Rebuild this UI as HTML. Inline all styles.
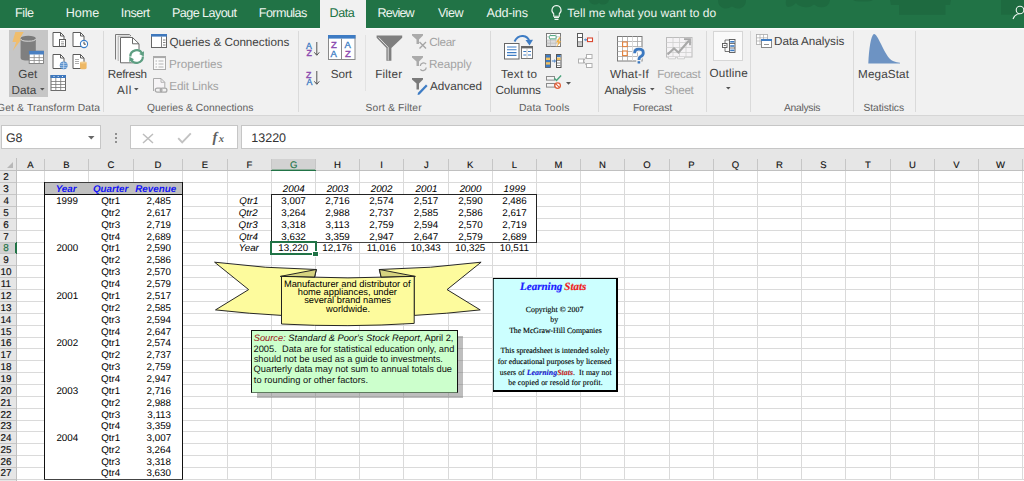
<!DOCTYPE html><html><head><meta charset="utf-8"><style>
html,body{margin:0;padding:0;}
body{width:1024px;height:481px;overflow:hidden;position:relative;background:#fff;font-family:"Liberation Sans",sans-serif;}
.t{position:absolute;white-space:pre;text-rendering:geometricPrecision;}
.r{position:absolute;}
.s{position:absolute;overflow:visible;}
</style></head><body>
<div class="r" style="left:0px;top:0px;width:1024px;height:28px;background:#217346;"></div>
<svg class="s" style="left:0px;top:0px;" width="1024" height="27" viewBox="0 0 1024 27">
<g fill="#1e6a40">
<path d="M589 0 h20 q-1 4 -5 4.4 q-3 0.2 -5 -1.5 q-2 1.7 -5 1.5 q-4 -0.4 -5 -4.4z"/>
<path d="M718 0 h28 q0 6 -5 8 q-4 1.5 -9 -1.5 q-5 3 -9 1.5 q-5 -2 -5 -8z"/>
<path d="M786 0 h44 q-1 6 -6 7 q-6 1 -10 -2.5 q-4 3.5 -10 2.5 q-6 -1 -8 -4 q-4 4 -8 4 q-3 -1 -2 -7z"/>
<path d="M853 0 h20 q-2 1.5 -10 1.5 q-8 0 -10 -1.5z"/>
<path d="M890 0 h61 l-1 5 h-4.5 v9.7 h-46.5 v-9.7 h-8z"/>
<path d="M1001 0 h23 v14.7 h-23z"/>
</g></svg>
<div class="t" style="left:15.09px;top:7px;font-size:12.6px;line-height:12.6px;color:#eef5f0;font-family:'Liberation Sans', sans-serif;letter-spacing:-0.47px;">File</div>
<div class="t" style="left:65.69px;top:7px;font-size:12.6px;line-height:12.6px;color:#eef5f0;font-family:'Liberation Sans', sans-serif;letter-spacing:-0.035px;">Home</div>
<div class="t" style="left:120.87px;top:7px;font-size:12.6px;line-height:12.6px;color:#eef5f0;font-family:'Liberation Sans', sans-serif;letter-spacing:-0.461px;">Insert</div>
<div class="t" style="left:171.99px;top:7px;font-size:12.6px;line-height:12.6px;color:#eef5f0;font-family:'Liberation Sans', sans-serif;letter-spacing:-0.568px;">Page Layout</div>
<div class="t" style="left:258.74px;top:7px;font-size:12.6px;line-height:12.6px;color:#eef5f0;font-family:'Liberation Sans', sans-serif;letter-spacing:-0.549px;">Formulas</div>
<div class="r" style="left:320px;top:0px;width:46px;height:28px;background:#f1f1f1;"></div>
<div class="t" style="left:329.49px;top:7px;font-size:12.6px;line-height:12.6px;color:#217346;font-family:'Liberation Sans', sans-serif;letter-spacing:-0.443px;">Data</div>
<div class="t" style="left:377.49px;top:7px;font-size:12.6px;line-height:12.6px;color:#eef5f0;font-family:'Liberation Sans', sans-serif;letter-spacing:-0.814px;">Review</div>
<div class="t" style="left:437.94px;top:7px;font-size:12.6px;line-height:12.6px;color:#eef5f0;font-family:'Liberation Sans', sans-serif;letter-spacing:-0.509px;">View</div>
<div class="t" style="left:486.50px;top:7px;font-size:12.6px;line-height:12.6px;color:#eef5f0;font-family:'Liberation Sans', sans-serif;letter-spacing:-0.212px;">Add-ins</div>
<svg class="s" style="left:550px;top:4px;" width="14" height="17" viewBox="0 0 14 17"><path d="M6.5 1.5 a4.6 4.6 0 0 0 -2.8 8.2 v2.6 h5.6 v-2.6 a4.6 4.6 0 0 0 -2.8 -8.2z" fill="none" stroke="#eef5f0" stroke-width="1.1"/><path d="M4 13.5 h5 M4.5 15.3 h4" stroke="#eef5f0" stroke-width="1.2"/></svg>
<div class="t" style="left:567.26px;top:7px;font-size:12px;line-height:12px;color:#eef5f0;font-family:'Liberation Sans', sans-serif;letter-spacing:0.034px;">Tell me what you want to do</div>
<svg class="s" style="left:1000px;top:5px;" width="24" height="14" viewBox="0 0 24 14"><circle cx="20" cy="5" r="3.8" fill="none" stroke="#eef5f0" stroke-width="1.1"/><path d="M13 14 q2 -5 6.5 -5.2" fill="none" stroke="#eef5f0" stroke-width="1.1"/></svg>
<div class="r" style="left:0px;top:28px;width:1024px;height:87px;background:#f1f1f1;"></div>
<div class="r" style="left:0px;top:28px;width:1024px;height:1px;background:#fcfcfc;"></div>
<div class="r" style="left:0px;top:29px;width:1024px;height:1px;background:#f7f7f7;"></div>
<div class="r" style="left:320px;top:28px;width:46px;height:2px;background:#f1f1f1;"></div>
<div class="r" style="left:0px;top:115px;width:1024px;height:1px;background:#d6d6d6;"></div>
<div class="r" style="left:103px;top:31px;width:1px;height:81px;background:#dadada;"></div>
<div class="r" style="left:298px;top:31px;width:1px;height:81px;background:#dadada;"></div>
<div class="r" style="left:490px;top:31px;width:1px;height:81px;background:#dadada;"></div>
<div class="r" style="left:598px;top:31px;width:1px;height:81px;background:#dadada;"></div>
<div class="r" style="left:706px;top:31px;width:1px;height:81px;background:#dadada;"></div>
<div class="r" style="left:750px;top:31px;width:1px;height:81px;background:#dadada;"></div>
<div class="r" style="left:853px;top:31px;width:1px;height:81px;background:#dadada;"></div>
<div class="r" style="left:915px;top:31px;width:1px;height:81px;background:#dadada;"></div>
<div class="r" style="left:365px;top:35px;width:1px;height:56px;background:#e2e2e2;"></div>
<div class="t" style="left:-3.02px;top:104px;font-size:10.3px;line-height:10.3px;color:#606060;font-family:'Liberation Sans', sans-serif;letter-spacing:0.15px;">Get &amp; Transform Data</div>
<div class="t" style="left:147.04px;top:104px;font-size:10.3px;line-height:10.3px;color:#606060;font-family:'Liberation Sans', sans-serif;letter-spacing:0.019px;">Queries &amp; Connections</div>
<div class="t" style="left:365.54px;top:104px;font-size:10.3px;line-height:10.3px;color:#606060;font-family:'Liberation Sans', sans-serif;letter-spacing:0.149px;">Sort &amp; Filter</div>
<div class="t" style="left:518.93px;top:104px;font-size:10.3px;line-height:10.3px;color:#606060;font-family:'Liberation Sans', sans-serif;letter-spacing:0.219px;">Data Tools</div>
<div class="t" style="left:632.93px;top:104px;font-size:10.3px;line-height:10.3px;color:#606060;font-family:'Liberation Sans', sans-serif;letter-spacing:-0.127px;">Forecast</div>
<div class="t" style="left:784.00px;top:104px;font-size:10.3px;line-height:10.3px;color:#606060;font-family:'Liberation Sans', sans-serif;letter-spacing:-0.287px;">Analysis</div>
<div class="t" style="left:863.54px;top:104px;font-size:10.3px;line-height:10.3px;color:#606060;font-family:'Liberation Sans', sans-serif;letter-spacing:-0.07px;">Statistics</div>
<div class="r" style="left:9px;top:30px;width:39px;height:67px;background:#c6c6c6;"></div>
<svg class="s" style="left:9px;top:30px;" width="39" height="40" viewBox="0 0 39 40">
<path d="M6.4 1.9 h8.3 l-3.9 6.6 h2.2 l-9.2 12.2 l3.5 -8.7 h-3.9z" fill="#f0bd6c"/>
<path d="M11.6 8.5 v19.5 q0 2.6 7.6 2.6 q7.6 0 7.6 -2.6 v-19.5z" fill="#7f7f7f"/>
<ellipse cx="19.2" cy="8.5" rx="7.6" ry="2.7" fill="#7a7a7a"/>
<path d="M11.8 8.8 q0 2.4 7.4 2.4 q7.4 0 7.4 -2.4" fill="none" stroke="#e4e4e4" stroke-width="0.9"/>
<rect x="20.2" y="21.2" width="14.3" height="12.3" fill="#fff" stroke="#7c7c7c" stroke-width="0.9"/>
<rect x="19.9" y="20.9" width="15" height="3.6" fill="#4a80c2"/>
<path d="M20.2 27.6 h14.3 M20.2 30.5 h14.3 M25.2 24.5 v9 M30.2 24.5 v9" stroke="#8a8a8a" stroke-width="0.8"/>
</svg>
<div class="t" style="left:18.16px;top:69px;font-size:11.7px;line-height:11.7px;color:#424242;font-family:'Liberation Sans', sans-serif;letter-spacing:0.153px;">Get</div>
<div class="t" style="left:11.56px;top:85px;font-size:11.7px;line-height:11.7px;color:#424242;font-family:'Liberation Sans', sans-serif;">Data</div>
<svg class="s" style="left:40px;top:88px;" width="5" height="3" viewBox="0 0 5 3"><path d="M0 0 h4.6 l-2.3 2.6z" fill="#555"/></svg>
<svg class="s" style="left:52px;top:32px;" width="16" height="16" viewBox="0 0 16 16"><path d="M1 0.5 h7.5 l3.5 3.5 v10.5 h-11z" fill="#fff" stroke="#5a5a5a" stroke-width="1"/><path d="M8.5 0.5 v3.5 h3.5" fill="none" stroke="#5a5a5a" stroke-width="1"/><rect x="7.5" y="7.5" width="6" height="7" fill="#fff" stroke="#5a5a5a" stroke-width="1"/><path d="M9 9.8 h3 M9 11.5 h3 M9 13 h3" stroke="#888" stroke-width="0.7"/></svg>
<svg class="s" style="left:72px;top:32px;" width="16" height="16" viewBox="0 0 16 16"><path d="M1 0.5 h7.5 l3.5 3.5 v10.5 h-11z" fill="#fff" stroke="#5a5a5a" stroke-width="1"/><path d="M8.5 0.5 v3.5 h3.5" fill="none" stroke="#5a5a5a" stroke-width="1"/><circle cx="12" cy="12" r="3.6" fill="#fff" stroke="#3c7fc9" stroke-width="1.1"/><path d="M12 9.8 v2.4 h1.8" fill="none" stroke="#333" stroke-width="0.9"/></svg>
<svg class="s" style="left:52px;top:54px;" width="16" height="16" viewBox="0 0 16 16"><path d="M1 0.5 h7.5 l3.5 3.5 v10.5 h-11z" fill="#fff" stroke="#5a5a5a" stroke-width="1"/><path d="M8.5 0.5 v3.5 h3.5" fill="none" stroke="#5a5a5a" stroke-width="1"/><circle cx="11.7" cy="11.3" r="3.9" fill="#4a86c8"/><path d="M7.8 11.3 h7.8 M11.7 7.4 v7.8 M8.6 9.3 h6.2 M8.6 13.3 h6.2" stroke="#e8f0f8" stroke-width="0.6"/></svg>
<svg class="s" style="left:72px;top:54px;" width="16" height="16" viewBox="0 0 16 16"><path d="M1 0.5 h7.5 l3.5 3.5 v10.5 h-11z" fill="#fff" stroke="#5a5a5a" stroke-width="1"/><path d="M8.5 0.5 v3.5 h3.5" fill="none" stroke="#5a5a5a" stroke-width="1"/><path d="M3 5.5 h4 M3 7.5 h4 M3 9.5 h4" stroke="#999" stroke-width="0.8"/><path d="M8 8.5 v5.5 q0 1.3 3.3 1.3 q3.3 0 3.3 -1.3 v-5.5z" fill="#eeb864"/><ellipse cx="11.3" cy="8.5" rx="3.3" ry="1.1" fill="#f3cd8d"/></svg>
<svg class="s" style="left:50px;top:75px;" width="17" height="17" viewBox="0 0 17 17"><rect x="1" y="0.5" width="14.5" height="15" fill="#fff" stroke="#6c6c6c" stroke-width="1"/><rect x="0.5" y="0" width="15.5" height="3" fill="#3f78bd"/><path d="M1 6.5 h14.5 M1 9.5 h14.5 M1 12.5 h14.5 M5.8 3 v12.5 M10.7 3 v12.5" stroke="#777" stroke-width="0.8"/><path d="M3.5 1.5 h1 M7.7 1.5 h1 M12 1.5 h1" stroke="#fff" stroke-width="0.9"/></svg>
<svg class="s" style="left:113px;top:33px;" width="34" height="32" viewBox="0 0 34 32">
<path d="M2.5 26.5 V1.5 H16.5 L18 3" fill="none" stroke="#7a7a7a" stroke-width="1"/>
<path d="M5.2 28 V3.2 H17.5" fill="none" stroke="#b0b0b0" stroke-width="1"/>
<path d="M7.5 4.5 H19.5 L26 10.8 V29.8 H7.5 Z" fill="#fff" stroke="#6a6a6a" stroke-width="1"/>
<path d="M19.5 4.5 V10.8 H26" fill="none" stroke="#6a6a6a" stroke-width="1"/>
<circle cx="23.6" cy="23.6" r="7.6" fill="#fff"/>
<path d="M17.3 23.6 A6.3 6.3 0 0 1 29.3 20.9" fill="none" stroke="#5e9e82" stroke-width="2.2"/>
<path d="M30.98 18.18 L26.14 20.98 L30.81 23.48 Z" fill="#5e9e82"/>
<path d="M29.9 23.6 A6.3 6.3 0 0 1 17.9 26.3" fill="none" stroke="#5e9e82" stroke-width="2.2"/>
<path d="M16.22 29.02 L21.06 26.22 L16.39 23.72 Z" fill="#5e9e82"/>
</svg>
<div class="t" style="left:107.81px;top:69px;font-size:11.7px;line-height:11.7px;color:#424242;font-family:'Liberation Sans', sans-serif;letter-spacing:-0.292px;">Refresh</div>
<div class="t" style="left:117.10px;top:85px;font-size:11.7px;line-height:11.7px;color:#424242;font-family:'Liberation Sans', sans-serif;letter-spacing:0.587px;">All</div>
<svg class="s" style="left:134px;top:88px;" width="5" height="3" viewBox="0 0 5 3"><path d="M0 0 h4.6 l-2.3 2.6z" fill="#555"/></svg>
<svg class="s" style="left:151px;top:34px;" width="16" height="14" viewBox="0 0 16 14"><rect x="0.5" y="0.5" width="15" height="13" fill="#fff" stroke="#666" stroke-width="1"/><rect x="0" y="0" width="16" height="2.6" fill="#3f78bd"/><path d="M10.5 2.6 v11 M12 6 h2.5 M12 8.5 h2.5 M12 11 h2.5" stroke="#777" stroke-width="0.9"/></svg>
<div class="t" style="left:169.47px;top:37px;font-size:11.7px;line-height:11.7px;color:#424242;font-family:'Liberation Sans', sans-serif;letter-spacing:-0.02px;">Queries &amp; Connections</div>
<svg class="s" style="left:153px;top:56px;" width="13" height="14" viewBox="0 0 13 14"><rect x="0.5" y="0.5" width="12" height="13" fill="#fafafa" stroke="#ababab" stroke-width="1"/><rect x="0.5" y="0.5" width="12" height="1.6" fill="#ababab"/><path d="M2.5 5 h1.5 M5.5 5 h5 M2.5 8 h1.5 M5.5 8 h5 M2.5 11 h1.5 M5.5 11 h5" stroke="#b4b4b4" stroke-width="1"/></svg>
<div class="t" style="left:169.06px;top:59px;font-size:11.7px;line-height:11.7px;color:#a3a3a3;font-family:'Liberation Sans', sans-serif;letter-spacing:0.01px;">Properties</div>
<svg class="s" style="left:153px;top:78px;" width="16" height="16" viewBox="0 0 16 16"><path d="M0.5 13 v-12.5 h7.5 l3.8 3.8 v5.5" fill="#f6f4f6" stroke="#ababab" stroke-width="1"/><path d="M8 0.5 v3.8 h3.8" fill="none" stroke="#ababab" stroke-width="0.9"/><rect x="2.3" y="10.2" width="6.6" height="3.9" rx="1.9" fill="none" stroke="#a8a8a8" stroke-width="1.3"/><rect x="7.3" y="10.2" width="6.6" height="3.9" rx="1.9" fill="none" stroke="#a8a8a8" stroke-width="1.3"/></svg>
<div class="t" style="left:169.31px;top:81px;font-size:11.7px;line-height:11.7px;color:#a3a3a3;font-family:'Liberation Sans', sans-serif;letter-spacing:-0.142px;">Edit Links</div>
<svg class="s" style="left:305.5px;top:42px;" width="16" height="15" viewBox="0 0 16 15"><text x="0" y="6.6" font-family="Liberation Sans" font-size="8.8" fill="#3e7cc4" stroke="#3e7cc4" stroke-width="0.35">A</text><text x="0.4" y="13.8" font-family="Liberation Sans" font-size="8.8" fill="#8c4bb0" stroke="#8c4bb0" stroke-width="0.35">Z</text><path d="M10.8 0 v13 M8.3 10.3 l2.5 3 l2.5 -3" fill="none" stroke="#555" stroke-width="1"/></svg>
<svg class="s" style="left:305.5px;top:71px;" width="16" height="15" viewBox="0 0 16 15"><text x="0" y="6.6" font-family="Liberation Sans" font-size="8.8" fill="#8c4bb0" stroke="#8c4bb0" stroke-width="0.35">Z</text><text x="0.4" y="13.8" font-family="Liberation Sans" font-size="8.8" fill="#3e7cc4" stroke="#3e7cc4" stroke-width="0.35">A</text><path d="M10.8 0 v13 M8.3 10.3 l2.5 3 l2.5 -3" fill="none" stroke="#555" stroke-width="1"/></svg>
<svg class="s" style="left:328px;top:35px;" width="28" height="25" viewBox="0 0 28 25">
<rect x="0.5" y="0.5" width="26.5" height="24" fill="#fff" stroke="#8a8a8a" stroke-width="1"/>
<rect x="0" y="0" width="27.5" height="3.6" fill="#3e7cc4"/>
<path d="M13.5 3.6 v21" stroke="#8a8a8a" stroke-width="1"/>
<text x="3" y="13" font-family="Liberation Sans" font-size="9.5" fill="#8c4bb0" stroke="#8c4bb0" stroke-width="0.35">Z</text>
<text x="2.6" y="22" font-family="Liberation Sans" font-size="9.5" fill="#3e7cc4" stroke="#3e7cc4" stroke-width="0.35">A</text>
<text x="16.5" y="13" font-family="Liberation Sans" font-size="9.5" fill="#3e7cc4" stroke="#3e7cc4" stroke-width="0.35">A</text>
<text x="17" y="22" font-family="Liberation Sans" font-size="9.5" fill="#8c4bb0" stroke="#8c4bb0" stroke-width="0.35">Z</text>
</svg>
<div class="t" style="left:330.72px;top:69px;font-size:11.7px;line-height:11.7px;color:#424242;font-family:'Liberation Sans', sans-serif;letter-spacing:-0.059px;">Sort</div>
<svg class="s" style="left:376px;top:35px;" width="27" height="26" viewBox="0 0 27 26"><path d="M0.6 0.6 h25.6 v2.2 l-10.8 10.2 v12.8 h-5 v-12.8 l-9.8 -10.2z" fill="#7f7f7f"/><path d="M2.6 2.4 l9.6 10 v13" fill="none" stroke="#f4f4f4" stroke-width="0.8"/></svg>
<div class="t" style="left:375.31px;top:69px;font-size:11.7px;line-height:11.7px;color:#424242;font-family:'Liberation Sans', sans-serif;letter-spacing:0.158px;">Filter</div>
<svg class="s" style="left:412px;top:34px;" width="16" height="16" viewBox="0 0 16 16"><path d="M0 0 h11 v1.5 l-4 4 v4.5 h-2.5 v-4.5 l-4.5 -4z" fill="#ababab"/><path d="M7.5 8 l6.5 6.5 M14 8 l-6.5 6.5" stroke="#a5a5a5" stroke-width="1.4"/></svg>
<div class="t" style="left:429.31px;top:37px;font-size:11.7px;line-height:11.7px;color:#a3a3a3;font-family:'Liberation Sans', sans-serif;letter-spacing:-0.386px;">Clear</div>
<svg class="s" style="left:412px;top:56px;" width="16" height="16" viewBox="0 0 16 16"><path d="M0 0 h11 v1.5 l-4 4 v4.5 h-2.5 v-4.5 l-4.5 -4z" fill="#ababab"/><path d="M8.3 10 a3.2 3.2 0 0 1 5.8 -1.8 M14.2 11.5 a3.2 3.2 0 0 1 -5.8 1.8" fill="none" stroke="#a8a8a8" stroke-width="1.3"/></svg>
<div class="t" style="left:428.96px;top:59px;font-size:11.7px;line-height:11.7px;color:#a3a3a3;font-family:'Liberation Sans', sans-serif;letter-spacing:-0.042px;">Reapply</div>
<svg class="s" style="left:412px;top:78px;" width="17" height="17" viewBox="0 0 17 17"><path d="M0 0 h11 v1.5 l-4 4 v6 h-2.5 v-6 l-4.5 -4z" fill="#7a7a7a"/><path d="M6 14.8 l8 -8.3 l1.6 1.6 l-8 8.3 l-2 0.6z" fill="#3e7cc4"/></svg>
<div class="t" style="left:430.00px;top:81px;font-size:11.7px;line-height:11.7px;color:#424242;font-family:'Liberation Sans', sans-serif;letter-spacing:0.001px;">Advanced</div>
<svg class="s" style="left:503px;top:35px;" width="31" height="25" viewBox="0 0 31 25">
<path d="M11.5 6.5 q3 -6 8.5 -5.5 q5 0.5 6.5 5.5" fill="none" stroke="#3e7cc4" stroke-width="2"/>
<path d="M22.5 5 l4 5.5 l3.5 -5.8z" fill="#3e7cc4"/>
<rect x="1.5" y="8.5" width="14.5" height="15.5" fill="#fff" stroke="#666" stroke-width="1"/>
<path d="M4 12 h9.5 M4 14.8 h9.5 M4 17.6 h9.5 M4 20.4 h9.5" stroke="#3e7cc4" stroke-width="1.1"/>
<rect x="18.5" y="11.5" width="11" height="12" fill="#fff" stroke="#777" stroke-width="1"/>
<rect x="18" y="11" width="12" height="2.4" fill="#666"/>
<path d="M20.3 16.5 h3 M25 16.5 h3 M20.3 20 h3 M25 20 h3" stroke="#3e7cc4" stroke-width="1"/>
<path d="M24 13.4 v10" stroke="#aaa" stroke-width="0.6"/>
</svg>
<div class="t" style="left:501.02px;top:69px;font-size:11.7px;line-height:11.7px;color:#424242;font-family:'Liberation Sans', sans-serif;letter-spacing:0.249px;">Text to</div>
<div class="t" style="left:495.42px;top:85px;font-size:11.7px;line-height:11.7px;color:#424242;font-family:'Liberation Sans', sans-serif;letter-spacing:-0.094px;">Columns</div>
<svg class="s" style="left:546px;top:33px;" width="16" height="15" viewBox="0 0 16 15"><rect x="0.5" y="0.5" width="14" height="13" fill="#fff" stroke="#7a7a7a" stroke-width="1"/><rect x="1" y="7" width="9" height="6" fill="#dcdcdc"/><path d="M0.5 3.8 h14 M0.5 7 h14 M0.5 10.2 h14 M4.5 0.5 v13 M10 0.5 v13" stroke="#b8b8b8" stroke-width="0.7"/><rect x="3.3" y="2.6" width="6.8" height="3.3" rx="0.8" fill="#fff" stroke="#49a37b" stroke-width="1"/><path d="M13.2 4.2 l-3.3 5.3 h2.3 l-1.8 5 l4.8 -6.2 h-2.4 l1.8 -4.1z" fill="#f0b24a"/></svg>
<svg class="s" style="left:545px;top:54px;" width="17" height="14" viewBox="0 0 17 14"><rect x="0.5" y="0.5" width="5" height="13" fill="#3e7cc4" stroke="#555" stroke-width="0.8"/><rect x="1" y="3.6" width="4" height="2.4" fill="#f0c060"/><rect x="1" y="8.2" width="4" height="2.4" fill="#f0c060"/><rect x="11.5" y="0.5" width="4.5" height="13" fill="#fff" stroke="#555" stroke-width="1"/><rect x="12" y="1" width="3.5" height="2.2" fill="#3e7cc4"/><rect x="12" y="3.6" width="3.5" height="2.4" fill="#f0c060"/><path d="M12 6.5 h3.5 M12 9 h3.5 M12 11.5 h3.5" stroke="#777" stroke-width="0.8"/><path d="M6.8 7 h3.6 M9 5.6 l1.5 1.4 l-1.5 1.4" fill="none" stroke="#3e7cc4" stroke-width="1"/></svg>
<svg class="s" style="left:546px;top:75px;" width="16" height="14" viewBox="0 0 16 14"><rect x="0.5" y="1.5" width="8" height="3.6" fill="#f4f4f4" stroke="#8a8a8a" stroke-width="1"/><rect x="0.5" y="8.5" width="8" height="3.6" fill="#f4f4f4" stroke="#8a8a8a" stroke-width="1"/><path d="M8.3 3.3 l2.2 2.2 l4.6 -5" fill="none" stroke="#49a37b" stroke-width="1.4"/><circle cx="11.6" cy="10.6" r="2.8" fill="#fff" stroke="#e0603c" stroke-width="1.3"/><path d="M9.8 8.8 l3.6 3.6" stroke="#e0603c" stroke-width="1.1"/></svg>
<svg class="s" style="left:566px;top:82px;" width="5" height="3" viewBox="0 0 5 3"><path d="M0 0 h5 l-2.5 2.8z" fill="#555"/></svg>
<svg class="s" style="left:577px;top:33px;" width="16" height="14" viewBox="0 0 16 14"><rect x="0.5" y="0.5" width="5" height="13" fill="#fff" stroke="#5a5a5a" stroke-width="1"/><path d="M0.5 4.5 h5 M0.5 9 h5" stroke="#5a5a5a" stroke-width="1"/><rect x="1" y="9.5" width="4" height="3.5" fill="#ccc"/><rect x="10.5" y="5" width="5" height="3.6" fill="#fff" stroke="#d9462e" stroke-width="1.1"/><path d="M7 6.8 h3 M8.3 5.8 l1.2 1 l-1.2 1" fill="none" stroke="#3e7cc4" stroke-width="0.9"/></svg>
<svg class="s" style="left:578px;top:54px;" width="15" height="14" viewBox="0 0 15 14"><rect x="0.5" y="5" width="5" height="4" fill="#fff" stroke="#b0b0b0" stroke-width="1"/><rect x="8.5" y="0.5" width="5.5" height="4" fill="#fff" stroke="#b0b0b0" stroke-width="1"/><rect x="8.5" y="9.5" width="5.5" height="4" fill="#fff" stroke="#b0b0b0" stroke-width="1"/><path d="M5.5 7 l3 -4.5 M5.5 7 l3 4.5" stroke="#b0b0b0" stroke-width="1"/></svg>
<svg class="s" style="left:617px;top:36px;" width="28" height="28" viewBox="0 0 28 28">
<rect x="0.5" y="0.5" width="24.5" height="24.5" fill="#fff" stroke="#7a7a7a" stroke-width="1"/>
<path d="M0.5 5.5 h24.5 M0.5 10.5 h24.5 M0.5 15.5 h24.5 M0.5 20.5 h24.5 M5.5 0.5 v24.5 M10.5 0.5 v24.5 M20.5 0.5 v24.5" stroke="#a8a8a8" stroke-width="0.8"/>
<path d="M15.5 0.5 v24.5" stroke="#d8d8d8" stroke-width="0.9"/>
<rect x="5.6" y="6" width="4.6" height="4.6" fill="#fff" stroke="#e2803a" stroke-width="1.1"/>
<rect x="5.6" y="15" width="4.6" height="4.6" fill="#fff" stroke="#e2803a" stroke-width="1.1"/>
<path d="M17.6 17.2 q0 -4 4.3 -4 q4.4 0 4.4 3.7 q0 2.4 -2.5 3.6 q-1.8 0.8 -1.8 3.4" fill="none" stroke="#f1f1f1" stroke-width="5"/>
<rect x="19.2" y="24" width="5.2" height="4.6" fill="#f1f1f1"/>
<path d="M17.6 17.2 q0 -4 4.3 -4 q4.4 0 4.4 3.7 q0 2.4 -2.5 3.6 q-1.8 0.8 -1.8 3.4" fill="none" stroke="#3b78c0" stroke-width="2.8"/>
<rect x="20.6" y="25.2" width="2.6" height="2.3" fill="#3b78c0"/>
</svg>
<div class="t" style="left:609.94px;top:69px;font-size:11.7px;line-height:11.7px;color:#424242;font-family:'Liberation Sans', sans-serif;letter-spacing:0.179px;">What-If</div>
<div class="t" style="left:604.50px;top:85px;font-size:11.7px;line-height:11.7px;color:#424242;font-family:'Liberation Sans', sans-serif;letter-spacing:-0.275px;">Analysis</div>
<svg class="s" style="left:650px;top:88px;" width="5" height="3" viewBox="0 0 5 3"><path d="M0 0 h4.6 l-2.3 2.6z" fill="#555"/></svg>
<svg class="s" style="left:666px;top:37px;" width="27" height="23" viewBox="0 0 27 23">
<rect x="0.5" y="0.5" width="25.5" height="19.5" fill="#f5f3f5" stroke="#bcbcbc" stroke-width="1"/>
<path d="M0.5 5.5 h25.5 M0.5 10.5 h25.5 M0.5 15.5 h25.5 M7 0.5 v19.5 M13.5 0.5 v19.5 M20 0.5 v19.5" stroke="#cfcfcf" stroke-width="0.8"/>
<path d="M1.5 17.5 l6.5 -6 l4.5 4 l10.5 -12" fill="none" stroke="#a8a8a8" stroke-width="2.1"/>
<path d="M18 2.2 h6 v6" fill="none" stroke="#a8a8a8" stroke-width="1.8"/>
<path d="M2.5 20 v1.8 h7 v-1.8 M11.5 20 v1.8 h7 v-1.8" fill="#f5f3f5" stroke="#c8c8c8" stroke-width="0.8"/>
</svg>
<div class="t" style="left:657.16px;top:69px;font-size:11.7px;line-height:11.7px;color:#a3a3a3;font-family:'Liberation Sans', sans-serif;letter-spacing:-0.28px;">Forecast</div>
<div class="t" style="left:664.57px;top:85px;font-size:11.7px;line-height:11.7px;color:#a3a3a3;font-family:'Liberation Sans', sans-serif;letter-spacing:-0.325px;">Sheet</div>
<div class="r" style="left:713px;top:31px;width:30px;height:30px;background:#fafafa;box-sizing:border-box;border:1px solid #d6d6d6;"></div>
<svg class="s" style="left:721.5px;top:38.5px;" width="14" height="14" viewBox="0 0 14 14"><rect x="0.5" y="4.5" width="4.5" height="4" fill="#fff" stroke="#555" stroke-width="0.9"/><path d="M1.8 6.5 h2" stroke="#555" stroke-width="0.8"/><path d="M3 4.5 v-3.5 h4 M3 8.5 v4 h4" fill="none" stroke="#555" stroke-width="0.8"/><rect x="7.5" y="0.5" width="5.5" height="13" fill="#fff" stroke="#555" stroke-width="0.9"/><path d="M7.5 4.5 h5.5 M7.5 9 h5.5" stroke="#555" stroke-width="0.8"/><rect x="8.2" y="2" width="4.2" height="1.6" fill="#3e7cc4"/><rect x="8.2" y="6.2" width="4.2" height="1.6" fill="#3e7cc4"/><rect x="8.2" y="10.6" width="4.2" height="1.6" fill="#3e7cc4"/></svg>
<div class="t" style="left:709.47px;top:68px;font-size:11.7px;line-height:11.7px;color:#424242;font-family:'Liberation Sans', sans-serif;letter-spacing:0.212px;">Outline</div>
<svg class="s" style="left:726px;top:87px;" width="5" height="3" viewBox="0 0 5 3"><path d="M0 0 h4.6 l-2.3 2.6z" fill="#555"/></svg>
<svg class="s" style="left:756px;top:34px;" width="16" height="14" viewBox="0 0 16 14"><rect x="0.5" y="0.5" width="11" height="10" fill="#fff" stroke="#aaa" stroke-width="0.8"/><path d="M0.5 3.8 h11 M0.5 7 h11 M4 0.5 v10 M7.5 0.5 v10" stroke="#aaa" stroke-width="0.7"/><rect x="5.5" y="5.5" width="10" height="8" fill="#fff" stroke="#888" stroke-width="1"/><rect x="5" y="5" width="11" height="2" fill="#3e7cc4"/><path d="M8 10.5 h5" stroke="#888" stroke-width="0.9"/></svg>
<div class="t" style="left:774.06px;top:36px;font-size:11.7px;line-height:11.7px;color:#424242;font-family:'Liberation Sans', sans-serif;letter-spacing:-0.046px;">Data Analysis</div>
<svg class="s" style="left:868px;top:34px;" width="33" height="30" viewBox="0 0 33 30"><path d="M0.3 29.6 C1 14 3 2 5.5 0.2 C7.5 -0.8 9.5 3 13 10 C17 18 20 24.5 25 27 C28 28.5 30 28.5 32 28.8 V29.6 Z" fill="#6d93c3"/></svg>
<div class="t" style="left:858.06px;top:69px;font-size:11.7px;line-height:11.7px;color:#424242;font-family:'Liberation Sans', sans-serif;letter-spacing:0.131px;">MegaStat</div>
<div class="r" style="left:0px;top:116px;width:1024px;height:42px;background:#e6e6e6;"></div>
<div class="r" style="left:1px;top:125px;width:100px;height:24px;background:#fff;box-sizing:border-box;border:1px solid #c6c6c6;"></div>
<div class="t" style="left:5.88px;top:132px;font-size:12.4px;line-height:12.4px;color:#333;font-family:'Liberation Sans', sans-serif;">G8</div>
<svg class="s" style="left:88px;top:136px;" width="7" height="4" viewBox="0 0 7 4"><path d="M0 0 h6.5 l-3.25 3.5z" fill="#666"/></svg>
<div class="r" style="left:115px;top:133px;width:2px;height:2px;background:#8f8f8f;"></div>
<div class="r" style="left:115px;top:137px;width:2px;height:2px;background:#8f8f8f;"></div>
<div class="r" style="left:115px;top:141px;width:2px;height:2px;background:#8f8f8f;"></div>
<div class="r" style="left:130px;top:125px;width:108px;height:24px;background:#fff;box-sizing:border-box;border:1px solid #c6c6c6;"></div>
<svg class="s" style="left:142px;top:133px;" width="12" height="11" viewBox="0 0 12 11"><path d="M1 1 l10 9 M11 1 l-10 9" stroke="#bdbdbd" stroke-width="1.5"/></svg>
<svg class="s" style="left:177px;top:132px;" width="15" height="12" viewBox="0 0 15 12"><path d="M1.2 6.2 l4 4.2 l8.6 -9" fill="none" stroke="#c2c2c2" stroke-width="1.9"/></svg>
<div class="t" style="left:212.40px;top:131px;font-size:14.5px;line-height:14.5px;color:#606060;font-family:'Liberation Serif', serif;font-style:italic;font-weight:bold;">f</div>
<div class="t" style="left:218.66px;top:135px;font-size:10.5px;line-height:10.5px;color:#606060;font-family:'Liberation Serif', serif;font-style:italic;font-weight:bold;">x</div>
<div class="r" style="left:241px;top:125px;width:790px;height:24px;background:#fff;box-sizing:border-box;border:1px solid #c6c6c6;"></div>
<div class="t" style="left:251.31px;top:132px;font-size:12.5px;line-height:12.5px;color:#333;font-family:'Liberation Sans', sans-serif;">13220</div>
<div class="r" style="left:0px;top:158px;width:1024px;height:12px;background:#e6e6e6;"></div>
<div class="r" style="left:0px;top:170px;width:1024px;height:1px;background:#c0c0c0;"></div>
<div class="r" style="left:0px;top:171px;width:16px;height:310px;background:#e6e6e6;"></div>
<div class="r" style="left:16px;top:158px;width:1px;height:323px;background:#c0c0c0;"></div>
<div class="r" style="left:272px;top:159px;width:43px;height:11px;background:#d2d2d2;"></div>
<div class="r" style="left:271px;top:169px;width:45px;height:1px;background:#8fb09b;"></div>
<div class="r" style="left:271px;top:170px;width:45px;height:1px;background:#217346;"></div>
<div class="r" style="left:0px;top:243px;width:16px;height:10px;background:#d2d2d2;"></div>
<div class="r" style="left:15px;top:242px;width:2px;height:12px;background:#217346;"></div>
<div class="r" style="left:44px;top:171px;width:1px;height:310px;background:#dadada;"></div>
<div class="r" style="left:44px;top:159px;width:1px;height:11px;background:#c6c6c6;"></div>
<div class="r" style="left:88px;top:171px;width:1px;height:310px;background:#dadada;"></div>
<div class="r" style="left:88px;top:159px;width:1px;height:11px;background:#c6c6c6;"></div>
<div class="r" style="left:133px;top:171px;width:1px;height:310px;background:#dadada;"></div>
<div class="r" style="left:133px;top:159px;width:1px;height:11px;background:#c6c6c6;"></div>
<div class="r" style="left:182px;top:171px;width:1px;height:310px;background:#dadada;"></div>
<div class="r" style="left:182px;top:159px;width:1px;height:11px;background:#c6c6c6;"></div>
<div class="r" style="left:227px;top:171px;width:1px;height:310px;background:#dadada;"></div>
<div class="r" style="left:227px;top:159px;width:1px;height:11px;background:#c6c6c6;"></div>
<div class="r" style="left:271px;top:171px;width:1px;height:310px;background:#dadada;"></div>
<div class="r" style="left:271px;top:159px;width:1px;height:11px;background:#c6c6c6;"></div>
<div class="r" style="left:315px;top:171px;width:1px;height:310px;background:#dadada;"></div>
<div class="r" style="left:315px;top:159px;width:1px;height:11px;background:#c6c6c6;"></div>
<div class="r" style="left:359px;top:171px;width:1px;height:310px;background:#dadada;"></div>
<div class="r" style="left:359px;top:159px;width:1px;height:11px;background:#c6c6c6;"></div>
<div class="r" style="left:403px;top:171px;width:1px;height:310px;background:#dadada;"></div>
<div class="r" style="left:403px;top:159px;width:1px;height:11px;background:#c6c6c6;"></div>
<div class="r" style="left:448px;top:171px;width:1px;height:310px;background:#dadada;"></div>
<div class="r" style="left:448px;top:159px;width:1px;height:11px;background:#c6c6c6;"></div>
<div class="r" style="left:492px;top:171px;width:1px;height:310px;background:#dadada;"></div>
<div class="r" style="left:492px;top:159px;width:1px;height:11px;background:#c6c6c6;"></div>
<div class="r" style="left:536px;top:171px;width:1px;height:310px;background:#dadada;"></div>
<div class="r" style="left:536px;top:159px;width:1px;height:11px;background:#c6c6c6;"></div>
<div class="r" style="left:580px;top:171px;width:1px;height:310px;background:#dadada;"></div>
<div class="r" style="left:580px;top:159px;width:1px;height:11px;background:#c6c6c6;"></div>
<div class="r" style="left:624px;top:171px;width:1px;height:310px;background:#dadada;"></div>
<div class="r" style="left:624px;top:159px;width:1px;height:11px;background:#c6c6c6;"></div>
<div class="r" style="left:669px;top:171px;width:1px;height:310px;background:#dadada;"></div>
<div class="r" style="left:669px;top:159px;width:1px;height:11px;background:#c6c6c6;"></div>
<div class="r" style="left:713px;top:171px;width:1px;height:310px;background:#dadada;"></div>
<div class="r" style="left:713px;top:159px;width:1px;height:11px;background:#c6c6c6;"></div>
<div class="r" style="left:757px;top:171px;width:1px;height:310px;background:#dadada;"></div>
<div class="r" style="left:757px;top:159px;width:1px;height:11px;background:#c6c6c6;"></div>
<div class="r" style="left:801px;top:171px;width:1px;height:310px;background:#dadada;"></div>
<div class="r" style="left:801px;top:159px;width:1px;height:11px;background:#c6c6c6;"></div>
<div class="r" style="left:845px;top:171px;width:1px;height:310px;background:#dadada;"></div>
<div class="r" style="left:845px;top:159px;width:1px;height:11px;background:#c6c6c6;"></div>
<div class="r" style="left:890px;top:171px;width:1px;height:310px;background:#dadada;"></div>
<div class="r" style="left:890px;top:159px;width:1px;height:11px;background:#c6c6c6;"></div>
<div class="r" style="left:934px;top:171px;width:1px;height:310px;background:#dadada;"></div>
<div class="r" style="left:934px;top:159px;width:1px;height:11px;background:#c6c6c6;"></div>
<div class="r" style="left:978px;top:171px;width:1px;height:310px;background:#dadada;"></div>
<div class="r" style="left:978px;top:159px;width:1px;height:11px;background:#c6c6c6;"></div>
<div class="r" style="left:1022px;top:171px;width:1px;height:310px;background:#dadada;"></div>
<div class="r" style="left:1022px;top:159px;width:1px;height:11px;background:#c6c6c6;"></div>
<div class="r" style="left:17px;top:182px;width:1007px;height:1px;background:#dadada;"></div>
<div class="r" style="left:0px;top:182px;width:16px;height:1px;background:#c6c6c6;"></div>
<div class="r" style="left:17px;top:194px;width:1007px;height:1px;background:#dadada;"></div>
<div class="r" style="left:0px;top:194px;width:16px;height:1px;background:#c6c6c6;"></div>
<div class="r" style="left:17px;top:206px;width:1007px;height:1px;background:#dadada;"></div>
<div class="r" style="left:0px;top:206px;width:16px;height:1px;background:#c6c6c6;"></div>
<div class="r" style="left:17px;top:218px;width:1007px;height:1px;background:#dadada;"></div>
<div class="r" style="left:0px;top:218px;width:16px;height:1px;background:#c6c6c6;"></div>
<div class="r" style="left:17px;top:230px;width:1007px;height:1px;background:#dadada;"></div>
<div class="r" style="left:0px;top:230px;width:16px;height:1px;background:#c6c6c6;"></div>
<div class="r" style="left:17px;top:242px;width:1007px;height:1px;background:#dadada;"></div>
<div class="r" style="left:0px;top:242px;width:16px;height:1px;background:#c6c6c6;"></div>
<div class="r" style="left:17px;top:253px;width:1007px;height:1px;background:#dadada;"></div>
<div class="r" style="left:0px;top:253px;width:16px;height:1px;background:#c6c6c6;"></div>
<div class="r" style="left:17px;top:265px;width:1007px;height:1px;background:#dadada;"></div>
<div class="r" style="left:0px;top:265px;width:16px;height:1px;background:#c6c6c6;"></div>
<div class="r" style="left:17px;top:277px;width:1007px;height:1px;background:#dadada;"></div>
<div class="r" style="left:0px;top:277px;width:16px;height:1px;background:#c6c6c6;"></div>
<div class="r" style="left:17px;top:289px;width:1007px;height:1px;background:#dadada;"></div>
<div class="r" style="left:0px;top:289px;width:16px;height:1px;background:#c6c6c6;"></div>
<div class="r" style="left:17px;top:301px;width:1007px;height:1px;background:#dadada;"></div>
<div class="r" style="left:0px;top:301px;width:16px;height:1px;background:#c6c6c6;"></div>
<div class="r" style="left:17px;top:313px;width:1007px;height:1px;background:#dadada;"></div>
<div class="r" style="left:0px;top:313px;width:16px;height:1px;background:#c6c6c6;"></div>
<div class="r" style="left:17px;top:325px;width:1007px;height:1px;background:#dadada;"></div>
<div class="r" style="left:0px;top:325px;width:16px;height:1px;background:#c6c6c6;"></div>
<div class="r" style="left:17px;top:337px;width:1007px;height:1px;background:#dadada;"></div>
<div class="r" style="left:0px;top:337px;width:16px;height:1px;background:#c6c6c6;"></div>
<div class="r" style="left:17px;top:348px;width:1007px;height:1px;background:#dadada;"></div>
<div class="r" style="left:0px;top:348px;width:16px;height:1px;background:#c6c6c6;"></div>
<div class="r" style="left:17px;top:360px;width:1007px;height:1px;background:#dadada;"></div>
<div class="r" style="left:0px;top:360px;width:16px;height:1px;background:#c6c6c6;"></div>
<div class="r" style="left:17px;top:372px;width:1007px;height:1px;background:#dadada;"></div>
<div class="r" style="left:0px;top:372px;width:16px;height:1px;background:#c6c6c6;"></div>
<div class="r" style="left:17px;top:384px;width:1007px;height:1px;background:#dadada;"></div>
<div class="r" style="left:0px;top:384px;width:16px;height:1px;background:#c6c6c6;"></div>
<div class="r" style="left:17px;top:396px;width:1007px;height:1px;background:#dadada;"></div>
<div class="r" style="left:0px;top:396px;width:16px;height:1px;background:#c6c6c6;"></div>
<div class="r" style="left:17px;top:408px;width:1007px;height:1px;background:#dadada;"></div>
<div class="r" style="left:0px;top:408px;width:16px;height:1px;background:#c6c6c6;"></div>
<div class="r" style="left:17px;top:420px;width:1007px;height:1px;background:#dadada;"></div>
<div class="r" style="left:0px;top:420px;width:16px;height:1px;background:#c6c6c6;"></div>
<div class="r" style="left:17px;top:431px;width:1007px;height:1px;background:#dadada;"></div>
<div class="r" style="left:0px;top:431px;width:16px;height:1px;background:#c6c6c6;"></div>
<div class="r" style="left:17px;top:443px;width:1007px;height:1px;background:#dadada;"></div>
<div class="r" style="left:0px;top:443px;width:16px;height:1px;background:#c6c6c6;"></div>
<div class="r" style="left:17px;top:455px;width:1007px;height:1px;background:#dadada;"></div>
<div class="r" style="left:0px;top:455px;width:16px;height:1px;background:#c6c6c6;"></div>
<div class="r" style="left:17px;top:467px;width:1007px;height:1px;background:#dadada;"></div>
<div class="r" style="left:0px;top:467px;width:16px;height:1px;background:#c6c6c6;"></div>
<div class="r" style="left:17px;top:479px;width:1007px;height:1px;background:#dadada;"></div>
<div class="r" style="left:0px;top:479px;width:16px;height:1px;background:#c6c6c6;"></div>
<div class="r" style="left:17px;top:480px;width:1007px;height:1px;background:#fff;"></div>
<svg class="s" style="left:7px;top:162px;" width="7" height="7" viewBox="0 0 7 7"><path d="M6 0 v6 h-6z" fill="#b8b8b8"/></svg>
<div class="t" style="left:27.34px;top:161px;font-size:9.5px;line-height:9.5px;color:#111;font-family:'Liberation Sans', sans-serif;-webkit-text-stroke:0.15px currentColor;">A</div>
<div class="t" style="left:63.20px;top:161px;font-size:9.5px;line-height:9.5px;color:#111;font-family:'Liberation Sans', sans-serif;-webkit-text-stroke:0.15px currentColor;">B</div>
<div class="t" style="left:107.51px;top:161px;font-size:9.5px;line-height:9.5px;color:#111;font-family:'Liberation Sans', sans-serif;-webkit-text-stroke:0.15px currentColor;">C</div>
<div class="t" style="left:154.41px;top:161px;font-size:9.5px;line-height:9.5px;color:#111;font-family:'Liberation Sans', sans-serif;-webkit-text-stroke:0.15px currentColor;">D</div>
<div class="t" style="left:201.65px;top:161px;font-size:9.5px;line-height:9.5px;color:#111;font-family:'Liberation Sans', sans-serif;-webkit-text-stroke:0.15px currentColor;">E</div>
<div class="t" style="left:246.41px;top:161px;font-size:9.5px;line-height:9.5px;color:#111;font-family:'Liberation Sans', sans-serif;-webkit-text-stroke:0.15px currentColor;">F</div>
<div class="t" style="left:289.91px;top:161px;font-size:9.5px;line-height:9.5px;color:#217346;font-family:'Liberation Sans', sans-serif;-webkit-text-stroke:0.15px currentColor;">G</div>
<div class="t" style="left:334.08px;top:161px;font-size:9.5px;line-height:9.5px;color:#111;font-family:'Liberation Sans', sans-serif;-webkit-text-stroke:0.15px currentColor;">H</div>
<div class="t" style="left:380.19px;top:161px;font-size:9.5px;line-height:9.5px;color:#111;font-family:'Liberation Sans', sans-serif;-webkit-text-stroke:0.15px currentColor;">I</div>
<div class="t" style="left:423.91px;top:161px;font-size:9.5px;line-height:9.5px;color:#111;font-family:'Liberation Sans', sans-serif;-webkit-text-stroke:0.15px currentColor;">J</div>
<div class="t" style="left:467.01px;top:161px;font-size:9.5px;line-height:9.5px;color:#111;font-family:'Liberation Sans', sans-serif;-webkit-text-stroke:0.15px currentColor;">K</div>
<div class="t" style="left:511.63px;top:161px;font-size:9.5px;line-height:9.5px;color:#111;font-family:'Liberation Sans', sans-serif;-webkit-text-stroke:0.15px currentColor;">L</div>
<div class="t" style="left:554.56px;top:161px;font-size:9.5px;line-height:9.5px;color:#111;font-family:'Liberation Sans', sans-serif;-webkit-text-stroke:0.15px currentColor;">M</div>
<div class="t" style="left:599.08px;top:161px;font-size:9.5px;line-height:9.5px;color:#111;font-family:'Liberation Sans', sans-serif;-webkit-text-stroke:0.15px currentColor;">N</div>
<div class="t" style="left:643.32px;top:161px;font-size:9.5px;line-height:9.5px;color:#111;font-family:'Liberation Sans', sans-serif;-webkit-text-stroke:0.15px currentColor;">O</div>
<div class="t" style="left:688.20px;top:161px;font-size:9.5px;line-height:9.5px;color:#111;font-family:'Liberation Sans', sans-serif;-webkit-text-stroke:0.15px currentColor;">P</div>
<div class="t" style="left:731.82px;top:161px;font-size:9.5px;line-height:9.5px;color:#111;font-family:'Liberation Sans', sans-serif;-webkit-text-stroke:0.15px currentColor;">Q</div>
<div class="t" style="left:775.91px;top:161px;font-size:9.5px;line-height:9.5px;color:#111;font-family:'Liberation Sans', sans-serif;-webkit-text-stroke:0.15px currentColor;">R</div>
<div class="t" style="left:820.34px;top:161px;font-size:9.5px;line-height:9.5px;color:#111;font-family:'Liberation Sans', sans-serif;-webkit-text-stroke:0.15px currentColor;">S</div>
<div class="t" style="left:865.10px;top:161px;font-size:9.5px;line-height:9.5px;color:#111;font-family:'Liberation Sans', sans-serif;-webkit-text-stroke:0.15px currentColor;">T</div>
<div class="t" style="left:909.08px;top:161px;font-size:9.5px;line-height:9.5px;color:#111;font-family:'Liberation Sans', sans-serif;-webkit-text-stroke:0.15px currentColor;">U</div>
<div class="t" style="left:953.34px;top:161px;font-size:9.5px;line-height:9.5px;color:#111;font-family:'Liberation Sans', sans-serif;-webkit-text-stroke:0.15px currentColor;">V</div>
<div class="t" style="left:996.01px;top:161px;font-size:9.5px;line-height:9.5px;color:#111;font-family:'Liberation Sans', sans-serif;-webkit-text-stroke:0.15px currentColor;">W</div>
<div class="t" style="left:3.35px;top:173px;font-size:9.9px;line-height:9.9px;color:#111;font-family:'Liberation Sans', sans-serif;-webkit-text-stroke:0.15px currentColor;">2</div>
<div class="t" style="left:3.35px;top:185px;font-size:9.9px;line-height:9.9px;color:#111;font-family:'Liberation Sans', sans-serif;-webkit-text-stroke:0.15px currentColor;">3</div>
<div class="t" style="left:3.40px;top:197px;font-size:9.9px;line-height:9.9px;color:#111;font-family:'Liberation Sans', sans-serif;-webkit-text-stroke:0.15px currentColor;">4</div>
<div class="t" style="left:3.35px;top:209px;font-size:9.9px;line-height:9.9px;color:#111;font-family:'Liberation Sans', sans-serif;-webkit-text-stroke:0.15px currentColor;">5</div>
<div class="t" style="left:3.30px;top:221px;font-size:9.9px;line-height:9.9px;color:#111;font-family:'Liberation Sans', sans-serif;-webkit-text-stroke:0.15px currentColor;">6</div>
<div class="t" style="left:3.35px;top:233px;font-size:9.9px;line-height:9.9px;color:#111;font-family:'Liberation Sans', sans-serif;-webkit-text-stroke:0.15px currentColor;">7</div>
<div class="t" style="left:3.33px;top:244px;font-size:9.9px;line-height:9.9px;color:#217346;font-family:'Liberation Sans', sans-serif;-webkit-text-stroke:0.15px currentColor;">8</div>
<div class="t" style="left:3.35px;top:256px;font-size:9.9px;line-height:9.9px;color:#111;font-family:'Liberation Sans', sans-serif;-webkit-text-stroke:0.15px currentColor;">9</div>
<div class="t" style="left:0.41px;top:268px;font-size:9.9px;line-height:9.9px;color:#111;font-family:'Liberation Sans', sans-serif;-webkit-text-stroke:0.15px currentColor;">10</div>
<div class="t" style="left:0.83px;top:280px;font-size:9.9px;line-height:9.9px;color:#111;font-family:'Liberation Sans', sans-serif;-webkit-text-stroke:0.15px currentColor;">11</div>
<div class="t" style="left:0.48px;top:292px;font-size:9.9px;line-height:9.9px;color:#111;font-family:'Liberation Sans', sans-serif;-webkit-text-stroke:0.15px currentColor;">12</div>
<div class="t" style="left:0.43px;top:304px;font-size:9.9px;line-height:9.9px;color:#111;font-family:'Liberation Sans', sans-serif;-webkit-text-stroke:0.15px currentColor;">13</div>
<div class="t" style="left:0.38px;top:316px;font-size:9.9px;line-height:9.9px;color:#111;font-family:'Liberation Sans', sans-serif;-webkit-text-stroke:0.15px currentColor;">14</div>
<div class="t" style="left:0.43px;top:328px;font-size:9.9px;line-height:9.9px;color:#111;font-family:'Liberation Sans', sans-serif;-webkit-text-stroke:0.15px currentColor;">15</div>
<div class="t" style="left:0.43px;top:339px;font-size:9.9px;line-height:9.9px;color:#111;font-family:'Liberation Sans', sans-serif;-webkit-text-stroke:0.15px currentColor;">16</div>
<div class="t" style="left:0.48px;top:351px;font-size:9.9px;line-height:9.9px;color:#111;font-family:'Liberation Sans', sans-serif;-webkit-text-stroke:0.15px currentColor;">17</div>
<div class="t" style="left:0.43px;top:363px;font-size:9.9px;line-height:9.9px;color:#111;font-family:'Liberation Sans', sans-serif;-webkit-text-stroke:0.15px currentColor;">18</div>
<div class="t" style="left:0.46px;top:375px;font-size:9.9px;line-height:9.9px;color:#111;font-family:'Liberation Sans', sans-serif;-webkit-text-stroke:0.15px currentColor;">19</div>
<div class="t" style="left:0.53px;top:387px;font-size:9.9px;line-height:9.9px;color:#111;font-family:'Liberation Sans', sans-serif;-webkit-text-stroke:0.15px currentColor;">20</div>
<div class="t" style="left:0.58px;top:399px;font-size:9.9px;line-height:9.9px;color:#111;font-family:'Liberation Sans', sans-serif;-webkit-text-stroke:0.15px currentColor;">21</div>
<div class="t" style="left:0.61px;top:411px;font-size:9.9px;line-height:9.9px;color:#111;font-family:'Liberation Sans', sans-serif;-webkit-text-stroke:0.15px currentColor;">22</div>
<div class="t" style="left:0.56px;top:422px;font-size:9.9px;line-height:9.9px;color:#111;font-family:'Liberation Sans', sans-serif;-webkit-text-stroke:0.15px currentColor;">23</div>
<div class="t" style="left:0.51px;top:434px;font-size:9.9px;line-height:9.9px;color:#111;font-family:'Liberation Sans', sans-serif;-webkit-text-stroke:0.15px currentColor;">24</div>
<div class="t" style="left:0.56px;top:446px;font-size:9.9px;line-height:9.9px;color:#111;font-family:'Liberation Sans', sans-serif;-webkit-text-stroke:0.15px currentColor;">25</div>
<div class="t" style="left:0.56px;top:458px;font-size:9.9px;line-height:9.9px;color:#111;font-family:'Liberation Sans', sans-serif;-webkit-text-stroke:0.15px currentColor;">26</div>
<div class="t" style="left:0.61px;top:469px;font-size:9.9px;line-height:9.9px;color:#111;font-family:'Liberation Sans', sans-serif;-webkit-text-stroke:0.15px currentColor;">27</div>
<div class="r" style="left:45px;top:195px;width:137px;height:284px;background:#fff;"></div>
<div class="r" style="left:272px;top:195px;width:264px;height:47px;background:#fff;"></div>
<div class="r" style="left:45px;top:183px;width:137px;height:11px;background:#c0c0c0;"></div>
<div class="r" style="left:44px;top:182px;width:139px;height:1px;background:#404040;"></div>
<div class="r" style="left:44px;top:194px;width:139px;height:1px;background:#111;"></div>
<div class="r" style="left:44px;top:182px;width:1px;height:298px;background:#111;"></div>
<div class="r" style="left:182px;top:182px;width:1px;height:298px;background:#111;"></div>
<div class="r" style="left:44px;top:479px;width:139px;height:1px;background:#444;"></div>
<div class="r" style="left:271px;top:194px;width:266px;height:1px;background:#222;"></div>
<div class="r" style="left:271px;top:242px;width:266px;height:1px;background:#444;"></div>
<div class="r" style="left:271px;top:194px;width:1px;height:49px;background:#222;"></div>
<div class="r" style="left:536px;top:194px;width:1px;height:49px;background:#222;"></div>
<div class="t" style="left:55.67px;top:185px;font-size:9.8px;line-height:9.8px;color:#1414f5;font-family:'Liberation Sans', sans-serif;font-weight:bold;font-style:italic;">Year</div>
<div class="t" style="left:92.91px;top:185px;font-size:9.8px;line-height:9.8px;color:#1414f5;font-family:'Liberation Sans', sans-serif;font-weight:bold;font-style:italic;">Quarter</div>
<div class="t" style="left:135.30px;top:185px;font-size:9.8px;line-height:9.8px;color:#1414f5;font-family:'Liberation Sans', sans-serif;font-weight:bold;font-style:italic;">Revenue</div>
<div class="t" style="left:56.16px;top:197px;font-size:9.8px;line-height:9.8px;color:#000;font-family:'Liberation Sans', sans-serif;">1999</div>
<div class="t" style="left:101.17px;top:197px;font-size:9.8px;line-height:9.8px;color:#000;font-family:'Liberation Sans', sans-serif;">Qtr1</div>
<div class="t" style="left:146.49px;top:197px;font-size:9.8px;line-height:9.8px;color:#000;font-family:'Liberation Sans', sans-serif;">2,485</div>
<div class="t" style="left:101.19px;top:209px;font-size:9.8px;line-height:9.8px;color:#000;font-family:'Liberation Sans', sans-serif;">Qtr2</div>
<div class="t" style="left:146.59px;top:209px;font-size:9.8px;line-height:9.8px;color:#000;font-family:'Liberation Sans', sans-serif;">2,617</div>
<div class="t" style="left:101.15px;top:221px;font-size:9.8px;line-height:9.8px;color:#000;font-family:'Liberation Sans', sans-serif;">Qtr3</div>
<div class="t" style="left:146.54px;top:221px;font-size:9.8px;line-height:9.8px;color:#000;font-family:'Liberation Sans', sans-serif;">2,719</div>
<div class="t" style="left:101.10px;top:233px;font-size:9.8px;line-height:9.8px;color:#000;font-family:'Liberation Sans', sans-serif;">Qtr4</div>
<div class="t" style="left:146.54px;top:233px;font-size:9.8px;line-height:9.8px;color:#000;font-family:'Liberation Sans', sans-serif;">2,689</div>
<div class="t" style="left:56.41px;top:244px;font-size:9.8px;line-height:9.8px;color:#000;font-family:'Liberation Sans', sans-serif;">2000</div>
<div class="t" style="left:101.17px;top:244px;font-size:9.8px;line-height:9.8px;color:#000;font-family:'Liberation Sans', sans-serif;">Qtr1</div>
<div class="t" style="left:146.44px;top:244px;font-size:9.8px;line-height:9.8px;color:#000;font-family:'Liberation Sans', sans-serif;">2,590</div>
<div class="t" style="left:101.19px;top:256px;font-size:9.8px;line-height:9.8px;color:#000;font-family:'Liberation Sans', sans-serif;">Qtr2</div>
<div class="t" style="left:146.49px;top:256px;font-size:9.8px;line-height:9.8px;color:#000;font-family:'Liberation Sans', sans-serif;">2,586</div>
<div class="t" style="left:101.15px;top:268px;font-size:9.8px;line-height:9.8px;color:#000;font-family:'Liberation Sans', sans-serif;">Qtr3</div>
<div class="t" style="left:146.44px;top:268px;font-size:9.8px;line-height:9.8px;color:#000;font-family:'Liberation Sans', sans-serif;">2,570</div>
<div class="t" style="left:101.10px;top:280px;font-size:9.8px;line-height:9.8px;color:#000;font-family:'Liberation Sans', sans-serif;">Qtr4</div>
<div class="t" style="left:146.54px;top:280px;font-size:9.8px;line-height:9.8px;color:#000;font-family:'Liberation Sans', sans-serif;">2,579</div>
<div class="t" style="left:56.41px;top:292px;font-size:9.8px;line-height:9.8px;color:#000;font-family:'Liberation Sans', sans-serif;">2001</div>
<div class="t" style="left:101.17px;top:292px;font-size:9.8px;line-height:9.8px;color:#000;font-family:'Liberation Sans', sans-serif;">Qtr1</div>
<div class="t" style="left:146.59px;top:292px;font-size:9.8px;line-height:9.8px;color:#000;font-family:'Liberation Sans', sans-serif;">2,517</div>
<div class="t" style="left:101.19px;top:304px;font-size:9.8px;line-height:9.8px;color:#000;font-family:'Liberation Sans', sans-serif;">Qtr2</div>
<div class="t" style="left:146.49px;top:304px;font-size:9.8px;line-height:9.8px;color:#000;font-family:'Liberation Sans', sans-serif;">2,585</div>
<div class="t" style="left:101.15px;top:316px;font-size:9.8px;line-height:9.8px;color:#000;font-family:'Liberation Sans', sans-serif;">Qtr3</div>
<div class="t" style="left:146.39px;top:316px;font-size:9.8px;line-height:9.8px;color:#000;font-family:'Liberation Sans', sans-serif;">2,594</div>
<div class="t" style="left:101.10px;top:328px;font-size:9.8px;line-height:9.8px;color:#000;font-family:'Liberation Sans', sans-serif;">Qtr4</div>
<div class="t" style="left:146.59px;top:328px;font-size:9.8px;line-height:9.8px;color:#000;font-family:'Liberation Sans', sans-serif;">2,647</div>
<div class="t" style="left:56.41px;top:339px;font-size:9.8px;line-height:9.8px;color:#000;font-family:'Liberation Sans', sans-serif;">2002</div>
<div class="t" style="left:101.17px;top:339px;font-size:9.8px;line-height:9.8px;color:#000;font-family:'Liberation Sans', sans-serif;">Qtr1</div>
<div class="t" style="left:146.39px;top:339px;font-size:9.8px;line-height:9.8px;color:#000;font-family:'Liberation Sans', sans-serif;">2,574</div>
<div class="t" style="left:101.19px;top:351px;font-size:9.8px;line-height:9.8px;color:#000;font-family:'Liberation Sans', sans-serif;">Qtr2</div>
<div class="t" style="left:146.59px;top:351px;font-size:9.8px;line-height:9.8px;color:#000;font-family:'Liberation Sans', sans-serif;">2,737</div>
<div class="t" style="left:101.15px;top:363px;font-size:9.8px;line-height:9.8px;color:#000;font-family:'Liberation Sans', sans-serif;">Qtr3</div>
<div class="t" style="left:146.54px;top:363px;font-size:9.8px;line-height:9.8px;color:#000;font-family:'Liberation Sans', sans-serif;">2,759</div>
<div class="t" style="left:101.10px;top:375px;font-size:9.8px;line-height:9.8px;color:#000;font-family:'Liberation Sans', sans-serif;">Qtr4</div>
<div class="t" style="left:146.59px;top:375px;font-size:9.8px;line-height:9.8px;color:#000;font-family:'Liberation Sans', sans-serif;">2,947</div>
<div class="t" style="left:56.41px;top:387px;font-size:9.8px;line-height:9.8px;color:#000;font-family:'Liberation Sans', sans-serif;">2003</div>
<div class="t" style="left:101.17px;top:387px;font-size:9.8px;line-height:9.8px;color:#000;font-family:'Liberation Sans', sans-serif;">Qtr1</div>
<div class="t" style="left:146.49px;top:387px;font-size:9.8px;line-height:9.8px;color:#000;font-family:'Liberation Sans', sans-serif;">2,716</div>
<div class="t" style="left:101.19px;top:399px;font-size:9.8px;line-height:9.8px;color:#000;font-family:'Liberation Sans', sans-serif;">Qtr2</div>
<div class="t" style="left:146.49px;top:399px;font-size:9.8px;line-height:9.8px;color:#000;font-family:'Liberation Sans', sans-serif;">2,988</div>
<div class="t" style="left:101.15px;top:411px;font-size:9.8px;line-height:9.8px;color:#000;font-family:'Liberation Sans', sans-serif;">Qtr3</div>
<div class="t" style="left:147.23px;top:411px;font-size:9.8px;line-height:9.8px;color:#000;font-family:'Liberation Sans', sans-serif;">3,113</div>
<div class="t" style="left:101.10px;top:422px;font-size:9.8px;line-height:9.8px;color:#000;font-family:'Liberation Sans', sans-serif;">Qtr4</div>
<div class="t" style="left:146.54px;top:422px;font-size:9.8px;line-height:9.8px;color:#000;font-family:'Liberation Sans', sans-serif;">3,359</div>
<div class="t" style="left:56.41px;top:434px;font-size:9.8px;line-height:9.8px;color:#000;font-family:'Liberation Sans', sans-serif;">2004</div>
<div class="t" style="left:101.17px;top:434px;font-size:9.8px;line-height:9.8px;color:#000;font-family:'Liberation Sans', sans-serif;">Qtr1</div>
<div class="t" style="left:146.59px;top:434px;font-size:9.8px;line-height:9.8px;color:#000;font-family:'Liberation Sans', sans-serif;">3,007</div>
<div class="t" style="left:101.19px;top:446px;font-size:9.8px;line-height:9.8px;color:#000;font-family:'Liberation Sans', sans-serif;">Qtr2</div>
<div class="t" style="left:146.39px;top:446px;font-size:9.8px;line-height:9.8px;color:#000;font-family:'Liberation Sans', sans-serif;">3,264</div>
<div class="t" style="left:101.15px;top:458px;font-size:9.8px;line-height:9.8px;color:#000;font-family:'Liberation Sans', sans-serif;">Qtr3</div>
<div class="t" style="left:146.49px;top:458px;font-size:9.8px;line-height:9.8px;color:#000;font-family:'Liberation Sans', sans-serif;">3,318</div>
<div class="t" style="left:101.10px;top:469px;font-size:9.8px;line-height:9.8px;color:#000;font-family:'Liberation Sans', sans-serif;">Qtr4</div>
<div class="t" style="left:146.44px;top:469px;font-size:9.8px;line-height:9.8px;color:#000;font-family:'Liberation Sans', sans-serif;">3,630</div>
<div class="t" style="left:282.79px;top:185px;font-size:9.8px;line-height:9.8px;color:#000;font-family:'Liberation Sans', sans-serif;font-style:italic;">2004</div>
<div class="t" style="left:281.30px;top:197px;font-size:9.8px;line-height:9.8px;color:#000;font-family:'Liberation Sans', sans-serif;">3,007</div>
<div class="t" style="left:281.20px;top:209px;font-size:9.8px;line-height:9.8px;color:#000;font-family:'Liberation Sans', sans-serif;">3,264</div>
<div class="t" style="left:281.25px;top:221px;font-size:9.8px;line-height:9.8px;color:#000;font-family:'Liberation Sans', sans-serif;">3,318</div>
<div class="t" style="left:281.30px;top:233px;font-size:9.8px;line-height:9.8px;color:#000;font-family:'Liberation Sans', sans-serif;">3,632</div>
<div class="t" style="left:278.31px;top:244px;font-size:9.8px;line-height:9.8px;color:#000;font-family:'Liberation Sans', sans-serif;">13,220</div>
<div class="t" style="left:326.65px;top:185px;font-size:9.8px;line-height:9.8px;color:#000;font-family:'Liberation Sans', sans-serif;font-style:italic;">2003</div>
<div class="t" style="left:325.20px;top:197px;font-size:9.8px;line-height:9.8px;color:#000;font-family:'Liberation Sans', sans-serif;">2,716</div>
<div class="t" style="left:325.20px;top:209px;font-size:9.8px;line-height:9.8px;color:#000;font-family:'Liberation Sans', sans-serif;">2,988</div>
<div class="t" style="left:325.62px;top:221px;font-size:9.8px;line-height:9.8px;color:#000;font-family:'Liberation Sans', sans-serif;">3,113</div>
<div class="t" style="left:325.27px;top:233px;font-size:9.8px;line-height:9.8px;color:#000;font-family:'Liberation Sans', sans-serif;">3,359</div>
<div class="t" style="left:322.33px;top:244px;font-size:9.8px;line-height:9.8px;color:#000;font-family:'Liberation Sans', sans-serif;">12,176</div>
<div class="t" style="left:370.70px;top:185px;font-size:9.8px;line-height:9.8px;color:#000;font-family:'Liberation Sans', sans-serif;font-style:italic;">2002</div>
<div class="t" style="left:369.15px;top:197px;font-size:9.8px;line-height:9.8px;color:#000;font-family:'Liberation Sans', sans-serif;">2,574</div>
<div class="t" style="left:369.25px;top:209px;font-size:9.8px;line-height:9.8px;color:#000;font-family:'Liberation Sans', sans-serif;">2,737</div>
<div class="t" style="left:369.23px;top:221px;font-size:9.8px;line-height:9.8px;color:#000;font-family:'Liberation Sans', sans-serif;">2,759</div>
<div class="t" style="left:369.25px;top:233px;font-size:9.8px;line-height:9.8px;color:#000;font-family:'Liberation Sans', sans-serif;">2,947</div>
<div class="t" style="left:366.70px;top:244px;font-size:9.8px;line-height:9.8px;color:#000;font-family:'Liberation Sans', sans-serif;">11,016</div>
<div class="t" style="left:415.54px;top:185px;font-size:9.8px;line-height:9.8px;color:#000;font-family:'Liberation Sans', sans-serif;font-style:italic;">2001</div>
<div class="t" style="left:413.75px;top:197px;font-size:9.8px;line-height:9.8px;color:#000;font-family:'Liberation Sans', sans-serif;">2,517</div>
<div class="t" style="left:413.70px;top:209px;font-size:9.8px;line-height:9.8px;color:#000;font-family:'Liberation Sans', sans-serif;">2,585</div>
<div class="t" style="left:413.65px;top:221px;font-size:9.8px;line-height:9.8px;color:#000;font-family:'Liberation Sans', sans-serif;">2,594</div>
<div class="t" style="left:413.75px;top:233px;font-size:9.8px;line-height:9.8px;color:#000;font-family:'Liberation Sans', sans-serif;">2,647</div>
<div class="t" style="left:410.83px;top:244px;font-size:9.8px;line-height:9.8px;color:#000;font-family:'Liberation Sans', sans-serif;">10,343</div>
<div class="t" style="left:459.65px;top:185px;font-size:9.8px;line-height:9.8px;color:#000;font-family:'Liberation Sans', sans-serif;font-style:italic;">2000</div>
<div class="t" style="left:458.18px;top:197px;font-size:9.8px;line-height:9.8px;color:#000;font-family:'Liberation Sans', sans-serif;">2,590</div>
<div class="t" style="left:458.20px;top:209px;font-size:9.8px;line-height:9.8px;color:#000;font-family:'Liberation Sans', sans-serif;">2,586</div>
<div class="t" style="left:458.18px;top:221px;font-size:9.8px;line-height:9.8px;color:#000;font-family:'Liberation Sans', sans-serif;">2,570</div>
<div class="t" style="left:458.23px;top:233px;font-size:9.8px;line-height:9.8px;color:#000;font-family:'Liberation Sans', sans-serif;">2,579</div>
<div class="t" style="left:455.33px;top:244px;font-size:9.8px;line-height:9.8px;color:#000;font-family:'Liberation Sans', sans-serif;">10,325</div>
<div class="t" style="left:503.57px;top:185px;font-size:9.8px;line-height:9.8px;color:#000;font-family:'Liberation Sans', sans-serif;font-style:italic;">1999</div>
<div class="t" style="left:502.20px;top:197px;font-size:9.8px;line-height:9.8px;color:#000;font-family:'Liberation Sans', sans-serif;">2,486</div>
<div class="t" style="left:502.25px;top:209px;font-size:9.8px;line-height:9.8px;color:#000;font-family:'Liberation Sans', sans-serif;">2,617</div>
<div class="t" style="left:502.23px;top:221px;font-size:9.8px;line-height:9.8px;color:#000;font-family:'Liberation Sans', sans-serif;">2,719</div>
<div class="t" style="left:502.23px;top:233px;font-size:9.8px;line-height:9.8px;color:#000;font-family:'Liberation Sans', sans-serif;">2,689</div>
<div class="t" style="left:499.73px;top:244px;font-size:9.8px;line-height:9.8px;color:#000;font-family:'Liberation Sans', sans-serif;">10,511</div>
<div class="t" style="left:239.37px;top:197px;font-size:9.8px;line-height:9.8px;color:#000;font-family:'Liberation Sans', sans-serif;font-style:italic;">Qtr1</div>
<div class="t" style="left:238.69px;top:209px;font-size:9.8px;line-height:9.8px;color:#000;font-family:'Liberation Sans', sans-serif;font-style:italic;">Qtr2</div>
<div class="t" style="left:238.59px;top:221px;font-size:9.8px;line-height:9.8px;color:#000;font-family:'Liberation Sans', sans-serif;font-style:italic;">Qtr3</div>
<div class="t" style="left:238.88px;top:233px;font-size:9.8px;line-height:9.8px;color:#000;font-family:'Liberation Sans', sans-serif;font-style:italic;">Qtr4</div>
<div class="t" style="left:238.72px;top:244px;font-size:9.8px;line-height:9.8px;color:#000;font-family:'Liberation Sans', sans-serif;font-style:italic;">Year</div>
<div class="r" style="left:270px;top:241px;width:47px;height:14px;background:transparent;box-sizing:border-box;border:2px solid #217346;"></div>
<div class="r" style="left:313px;top:252px;width:5px;height:4px;background:#217346;box-shadow:0 0 0 1px #fff;"></div>
<svg class="s" style="left:0px;top:0px;pointer-events:none;" width="1024" height="481" viewBox="0 0 1024 481">
<path d="M214.6 262.2 Q265 268.6 316.5 269.5 L314.5 277.2 L281.5 276.4 L281.5 315.4 Q250 313.8 215.5 309.9 L248.65 289.6 Z" fill="#fdfb9d" stroke="#1c1c1c" stroke-width="0.95" stroke-linejoin="miter"/>
<path d="M481.1 262.2 Q430.7 268.6 379.2 269.5 L381.2 277.2 L414.2 276.4 L414.2 315.4 Q445.7 313.8 480.2 309.9 L447.05 289.6 Z" fill="#fdfb9d" stroke="#1c1c1c" stroke-width="0.95" stroke-linejoin="miter"/>
<path d="M280.3 276.4 L316.2 269.5 L314.5 277.4 Z" fill="#d6d37f" stroke="#1c1c1c" stroke-width="0.95" stroke-linejoin="miter"/>
<path d="M415.4 276.4 L379.5 269.5 L381.2 277.4 Z" fill="#d6d37f" stroke="#1c1c1c" stroke-width="0.95" stroke-linejoin="miter"/>
<path d="M281.5 276.4 Q348 279.4 414.2 276.4 L414.2 323.4 Q348 327.6 281.5 324 Z" fill="#fdfb9d" stroke="#1c1c1c" stroke-width="0.95"/>
</svg>
<div class="t" style="left:283.90px;top:280px;font-size:9.3px;line-height:9.3px;color:#000;font-family:'Liberation Sans', sans-serif;">Manufacturer and distributor of</div>
<div class="t" style="left:297.73px;top:288px;font-size:9.3px;line-height:9.3px;color:#000;font-family:'Liberation Sans', sans-serif;">home appliances, under</div>
<div class="t" style="left:304.19px;top:296px;font-size:9.3px;line-height:9.3px;color:#000;font-family:'Liberation Sans', sans-serif;">several brand names</div>
<div class="t" style="left:326.07px;top:305px;font-size:9.3px;line-height:9.3px;color:#000;font-family:'Liberation Sans', sans-serif;">worldwide.</div>
<div class="r" style="left:458px;top:336px;width:5px;height:57px;background:rgba(110,110,110,0.45);"></div>
<div class="r" style="left:257px;top:393px;width:206px;height:5px;background:rgba(110,110,110,0.45);"></div>
<div class="r" style="left:251px;top:330px;width:207px;height:63px;background:#ccffcc;box-sizing:border-box;border:1px solid #111;border-bottom-color:#5f7a5f;"></div>
<div class="t" style="left:253.72px;top:334px;font-size:9.3px;line-height:9.3px;color:#111;font-family:'Liberation Sans', sans-serif;font-style:italic;"><span style="color:#9b2020">Source:</span> Standard &amp; Poor's Stock Report<span style="font-style:normal">, April 2,</span></div>
<div class="t" style="left:253.53px;top:345px;font-size:9.3px;line-height:9.3px;color:#111;font-family:'Liberation Sans', sans-serif;">2005.  Data are for statistical education only, and</div>
<div class="t" style="left:253.72px;top:355px;font-size:9.3px;line-height:9.3px;color:#111;font-family:'Liberation Sans', sans-serif;">should not be used as a guide to investments.</div>
<div class="t" style="left:253.58px;top:365px;font-size:9.3px;line-height:9.3px;color:#111;font-family:'Liberation Sans', sans-serif;">Quarterly data may not sum to annual totals due</div>
<div class="t" style="left:253.86px;top:376px;font-size:9.3px;line-height:9.3px;color:#111;font-family:'Liberation Sans', sans-serif;">to rounding or other factors.</div>
<div class="r" style="left:493px;top:278px;width:125px;height:114px;background:#000;"></div>
<div class="r" style="left:494px;top:279px;width:122px;height:111px;background:#ccffff;"></div>
<div class="r" style="left:493px;top:279px;width:1px;height:111px;background:#2a4a4a;"></div>
<div class="t" style="left:520.10px;top:282px;font-size:11px;line-height:11px;color:#000;font-family:'Liberation Serif', serif;font-weight:bold;font-style:italic;-webkit-text-stroke:0.2px currentColor;"><span style="color:#1a1aff">Learning</span><span style="color:#ee1c1c;margin-left:2px">Stats</span></div>
<div class="t" style="left:525.68px;top:306px;font-size:7.9px;line-height:7.9px;color:#000;font-family:'Liberation Serif', serif;letter-spacing:-0.002px;-webkit-text-stroke:0.12px #000;">Copyright © 2007</div>
<div class="t" style="left:550.27px;top:316px;font-size:7.9px;line-height:7.9px;color:#000;font-family:'Liberation Serif', serif;-webkit-text-stroke:0.12px #000;">by</div>
<div class="t" style="left:509.14px;top:327px;font-size:7.8px;line-height:7.8px;color:#000;font-family:'Liberation Serif', serif;letter-spacing:-0.04px;-webkit-text-stroke:0.12px #000;">The McGraw-Hill Companies</div>
<div class="t" style="left:500.59px;top:347px;font-size:7.8px;line-height:7.8px;color:#000;font-family:'Liberation Serif', serif;letter-spacing:-0.001px;-webkit-text-stroke:0.12px #000;">This spreadsheet is intended solely</div>
<div class="t" style="left:497.77px;top:358px;font-size:7.8px;line-height:7.8px;color:#000;font-family:'Liberation Serif', serif;letter-spacing:-0.006px;-webkit-text-stroke:0.12px #000;">for educational purposes by licensed</div>
<div class="t" style="left:499.84px;top:369px;font-size:7.8px;line-height:7.8px;color:#000;font-family:'Liberation Serif', serif;letter-spacing:0.059px;-webkit-text-stroke:0.12px #000;">users of <span style="font-style:italic;font-weight:bold;color:#1a1aff">Learning</span><span style="font-style:italic;font-weight:bold;color:#ee1c1c">Stats</span>.  It may not</div>
<div class="t" style="left:508.26px;top:379px;font-size:7.8px;line-height:7.8px;color:#000;font-family:'Liberation Serif', serif;letter-spacing:0.085px;-webkit-text-stroke:0.12px #000;">be copied or resold for profit.</div>
</body></html>
